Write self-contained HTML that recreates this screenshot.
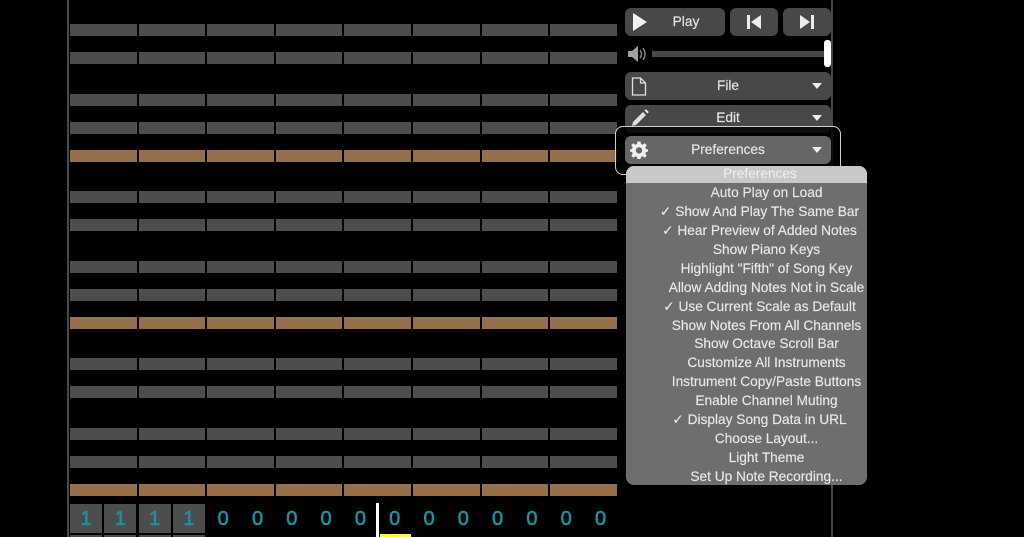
<!DOCTYPE html>
<html><head><meta charset="utf-8">
<style>
html,body{margin:0;padding:0;background:#000;width:1024px;height:537px;overflow:hidden}
body{position:relative;font-family:"Liberation Sans",sans-serif;color:#eee}
.a{position:absolute}
.c{position:absolute;height:12px;width:66.6px;background:#4d4d4d}
.b{background:#96704a}
.btn{position:absolute;background:#484848;border-radius:6px;text-align:center;font-size:13.7px;line-height:27px;height:28px;color:#e6e6e6;-webkit-text-stroke:.15px #e6e6e6}
.n{position:absolute;top:504px;width:32px;height:29px;text-align:center;font-size:20px;line-height:30px;color:#1793a8;-webkit-text-stroke:.6px #1793a8}
.m{position:absolute;left:626px;width:241px;text-align:center;font-size:13.7px;line-height:19px;height:19px;color:#e8e8e8;white-space:nowrap;-webkit-text-stroke:.15px #e8e8e8}
</style></head><body>
<div class="a" style="left:67px;top:0;width:2px;height:537px;background:#484848"></div>
<div class="a" style="left:831px;top:0;width:2px;height:537px;background:#484848"></div>
<div id="grid">
<div class="c" style="left:70.0px;top:24px"></div><div class="c" style="left:138.6px;top:24px"></div><div class="c" style="left:207.2px;top:24px"></div><div class="c" style="left:275.8px;top:24px"></div><div class="c" style="left:344.4px;top:24px"></div><div class="c" style="left:413.0px;top:24px"></div><div class="c" style="left:481.6px;top:24px"></div><div class="c" style="left:550.2px;top:24px"></div>
<div class="c" style="left:70.0px;top:52px"></div><div class="c" style="left:138.6px;top:52px"></div><div class="c" style="left:207.2px;top:52px"></div><div class="c" style="left:275.8px;top:52px"></div><div class="c" style="left:344.4px;top:52px"></div><div class="c" style="left:413.0px;top:52px"></div><div class="c" style="left:481.6px;top:52px"></div><div class="c" style="left:550.2px;top:52px"></div>
<div class="c" style="left:70.0px;top:94px"></div><div class="c" style="left:138.6px;top:94px"></div><div class="c" style="left:207.2px;top:94px"></div><div class="c" style="left:275.8px;top:94px"></div><div class="c" style="left:344.4px;top:94px"></div><div class="c" style="left:413.0px;top:94px"></div><div class="c" style="left:481.6px;top:94px"></div><div class="c" style="left:550.2px;top:94px"></div>
<div class="c" style="left:70.0px;top:122px"></div><div class="c" style="left:138.6px;top:122px"></div><div class="c" style="left:207.2px;top:122px"></div><div class="c" style="left:275.8px;top:122px"></div><div class="c" style="left:344.4px;top:122px"></div><div class="c" style="left:413.0px;top:122px"></div><div class="c" style="left:481.6px;top:122px"></div><div class="c" style="left:550.2px;top:122px"></div>
<div class="c b" style="left:70.0px;top:150px"></div><div class="c b" style="left:138.6px;top:150px"></div><div class="c b" style="left:207.2px;top:150px"></div><div class="c b" style="left:275.8px;top:150px"></div><div class="c b" style="left:344.4px;top:150px"></div><div class="c b" style="left:413.0px;top:150px"></div><div class="c b" style="left:481.6px;top:150px"></div><div class="c b" style="left:550.2px;top:150px"></div>
<div class="c" style="left:70.0px;top:191px"></div><div class="c" style="left:138.6px;top:191px"></div><div class="c" style="left:207.2px;top:191px"></div><div class="c" style="left:275.8px;top:191px"></div><div class="c" style="left:344.4px;top:191px"></div><div class="c" style="left:413.0px;top:191px"></div><div class="c" style="left:481.6px;top:191px"></div><div class="c" style="left:550.2px;top:191px"></div>
<div class="c" style="left:70.0px;top:219px"></div><div class="c" style="left:138.6px;top:219px"></div><div class="c" style="left:207.2px;top:219px"></div><div class="c" style="left:275.8px;top:219px"></div><div class="c" style="left:344.4px;top:219px"></div><div class="c" style="left:413.0px;top:219px"></div><div class="c" style="left:481.6px;top:219px"></div><div class="c" style="left:550.2px;top:219px"></div>
<div class="c" style="left:70.0px;top:261px"></div><div class="c" style="left:138.6px;top:261px"></div><div class="c" style="left:207.2px;top:261px"></div><div class="c" style="left:275.8px;top:261px"></div><div class="c" style="left:344.4px;top:261px"></div><div class="c" style="left:413.0px;top:261px"></div><div class="c" style="left:481.6px;top:261px"></div><div class="c" style="left:550.2px;top:261px"></div>
<div class="c" style="left:70.0px;top:289px"></div><div class="c" style="left:138.6px;top:289px"></div><div class="c" style="left:207.2px;top:289px"></div><div class="c" style="left:275.8px;top:289px"></div><div class="c" style="left:344.4px;top:289px"></div><div class="c" style="left:413.0px;top:289px"></div><div class="c" style="left:481.6px;top:289px"></div><div class="c" style="left:550.2px;top:289px"></div>
<div class="c b" style="left:70.0px;top:317px"></div><div class="c b" style="left:138.6px;top:317px"></div><div class="c b" style="left:207.2px;top:317px"></div><div class="c b" style="left:275.8px;top:317px"></div><div class="c b" style="left:344.4px;top:317px"></div><div class="c b" style="left:413.0px;top:317px"></div><div class="c b" style="left:481.6px;top:317px"></div><div class="c b" style="left:550.2px;top:317px"></div>
<div class="c" style="left:70.0px;top:358px"></div><div class="c" style="left:138.6px;top:358px"></div><div class="c" style="left:207.2px;top:358px"></div><div class="c" style="left:275.8px;top:358px"></div><div class="c" style="left:344.4px;top:358px"></div><div class="c" style="left:413.0px;top:358px"></div><div class="c" style="left:481.6px;top:358px"></div><div class="c" style="left:550.2px;top:358px"></div>
<div class="c" style="left:70.0px;top:386px"></div><div class="c" style="left:138.6px;top:386px"></div><div class="c" style="left:207.2px;top:386px"></div><div class="c" style="left:275.8px;top:386px"></div><div class="c" style="left:344.4px;top:386px"></div><div class="c" style="left:413.0px;top:386px"></div><div class="c" style="left:481.6px;top:386px"></div><div class="c" style="left:550.2px;top:386px"></div>
<div class="c" style="left:70.0px;top:428px"></div><div class="c" style="left:138.6px;top:428px"></div><div class="c" style="left:207.2px;top:428px"></div><div class="c" style="left:275.8px;top:428px"></div><div class="c" style="left:344.4px;top:428px"></div><div class="c" style="left:413.0px;top:428px"></div><div class="c" style="left:481.6px;top:428px"></div><div class="c" style="left:550.2px;top:428px"></div>
<div class="c" style="left:70.0px;top:456px"></div><div class="c" style="left:138.6px;top:456px"></div><div class="c" style="left:207.2px;top:456px"></div><div class="c" style="left:275.8px;top:456px"></div><div class="c" style="left:344.4px;top:456px"></div><div class="c" style="left:413.0px;top:456px"></div><div class="c" style="left:481.6px;top:456px"></div><div class="c" style="left:550.2px;top:456px"></div>
<div class="c b" style="left:70.0px;top:484px"></div><div class="c b" style="left:138.6px;top:484px"></div><div class="c b" style="left:207.2px;top:484px"></div><div class="c b" style="left:275.8px;top:484px"></div><div class="c b" style="left:344.4px;top:484px"></div><div class="c b" style="left:413.0px;top:484px"></div><div class="c b" style="left:481.6px;top:484px"></div><div class="c b" style="left:550.2px;top:484px"></div>
</div>

<div class="n" style="left:70px;background:#4d4d4d">1</div>
<div class="n" style="left:104.3px;background:#4d4d4d">1</div>
<div class="n" style="left:138.6px;background:#4d4d4d">1</div>
<div class="n" style="left:172.9px;background:#4d4d4d">1</div>
<div class="n" style="left:207.2px">0</div>
<div class="n" style="left:241.5px">0</div>
<div class="n" style="left:275.8px">0</div>
<div class="n" style="left:310.1px">0</div>
<div class="n" style="left:344.4px">0</div>
<div class="n" style="left:378.7px">0</div>
<div class="n" style="left:413px">0</div>
<div class="n" style="left:447.3px">0</div>
<div class="n" style="left:481.6px">0</div>
<div class="n" style="left:515.9px">0</div>
<div class="n" style="left:550.2px">0</div>
<div class="n" style="left:584.5px">0</div>
<div class="a" style="left:70px;top:535px;width:32px;height:2px;background:#4d4d4d"></div>
<div class="a" style="left:104.3px;top:535px;width:32px;height:2px;background:#4d4d4d"></div>
<div class="a" style="left:138.6px;top:535px;width:32px;height:2px;background:#4d4d4d"></div>
<div class="a" style="left:172.9px;top:535px;width:32px;height:2px;background:#4d4d4d"></div>
<div class="a" style="left:376px;top:503px;width:3px;height:34px;background:#fff"></div>
<div class="a" style="left:380px;top:534px;width:31px;height:3px;background:#ff3"></div>

<div class="btn" style="left:625px;top:8px;width:100px"><span style="margin-left:22px">Play</span></div>
<svg class="a" style="left:632px;top:12px" width="16" height="20"><path d="M1 1L15 10L1 19Z" fill="#f2f2f2"/></svg>
<div class="btn" style="left:730px;top:8px;width:48px"></div>
<svg class="a" style="left:746px;top:14px" width="16" height="16"><path d="M1 1H4V15H1ZM15 1V15L5 8Z" fill="#ececec"/></svg>
<div class="btn" style="left:783px;top:8px;width:48px"></div>
<svg class="a" style="left:799px;top:14px" width="16" height="16"><path d="M1 1V15L11 8ZM12 1H15V15H12Z" fill="#ececec"/></svg>

<svg class="a" style="left:628px;top:45px" width="20" height="18"><path d="M0 6H4L10 1V17L4 12H0Z" fill="#a0a0a0"/><path d="M12 5Q15 9 12 13M15 3Q19 9 15 15" stroke="#888" stroke-width="1.4" fill="none"/></svg>
<div class="a" style="left:652px;top:51px;width:174px;height:6px;background:#484848"></div>
<div class="a" style="left:824px;top:40px;width:7px;height:27px;background:#fff;border-radius:3px"></div>

<div class="btn" style="left:625px;top:72px;width:206px">File</div>
<svg class="a" style="left:631px;top:77px" width="16" height="19"><path d="M1.500 1H9.500L14.500 6V18H1.500Z" fill="none" stroke="#e0e0e0" stroke-width="1.3"/><path d="M9.500 1V6H14.500" fill="none" stroke="#e0e0e0" stroke-width="1.2"/></svg>
<svg class="a" style="left:812px;top:83px" width="10" height="7"><path d="M0 0H10L5 6Z" fill="#eee"/></svg>

<div class="btn" style="left:625px;top:105px;width:206px;line-height:25px">Edit</div>
<svg class="a" style="left:630px;top:108px" width="20" height="19"><path d="M2 18L3 14L13 4L16 7L6 17Z" fill="#e0e0e0"/><path d="M14.500 2.500L16 1.200L18.800 4L17.500 5.500Z" fill="#f0f0f0"/></svg>
<svg class="a" style="left:812px;top:115px" width="10" height="7"><path d="M0 0H10L5 6Z" fill="#eee"/></svg>

<div class="a" style="left:615px;top:126px;width:224px;height:47px;border:1px solid #d0d0d0;border-radius:8px;background:rgba(0,0,0,.82)"></div>
<div class="btn" style="left:625px;top:136px;width:206px;background:#666">Preferences</div>
<svg class="a" style="left:630px;top:141px" width="18" height="18" viewBox="0 0 18 18"><path fill="#f0f0f0" fill-rule="evenodd" d="M7.500 0.500H10.500L11 3L12.700 3.700L14.800 2.300L16.700 4.200L15.300 6.300L16 8L18 8.500V10.500L16 11L15.300 12.700L16.700 14.800L14.800 16.700L12.700 15.300L11 16L10.500 18H7.500L7 16L5.300 15.300L3.200 16.700L1.300 14.800L2.700 12.700L2 11L0 10.500V8.500L2 8L2.700 6.300L1.300 4.200L3.200 2.300L5.300 3.700L7 3ZM9 6.200A3.200 3.200 0 1 0 9 12.600A3.200 3.200 0 1 0 9 6.200Z"/></svg>
<svg class="a" style="left:812px;top:147px" width="10" height="7"><path d="M0 0H10L5 6Z" fill="#eee"/></svg>

<div class="a" style="left:626px;top:166px;width:241px;height:319px;background:#6e6e6e;border-radius:8px"></div>
<div class="a" style="left:626px;top:166px;width:241px;height:17px;background:#c8c8c8;border-radius:8px 8px 0 0"></div>
<div class="a" style="left:626px;top:164px;width:268px;text-align:center;font-size:13.7px;line-height:19px;color:#f0f0f0">Preferences</div>
<div class="m" style="top:183px;left:646px">Auto Play on Load</div>
<div class="m" style="top:202px;left:639px">✓ Show And Play The Same Bar</div>
<div class="m" style="top:221px;left:639px">✓ Hear Preview of Added Notes</div>
<div class="m" style="top:240px;left:646px">Show Piano Keys</div>
<div class="m" style="top:259px;left:646px">Highlight "Fifth" of Song Key</div>
<div class="m" style="top:278px;left:646px">Allow Adding Notes Not in Scale</div>
<div class="m" style="top:297px;left:639px">✓ Use Current Scale as Default</div>
<div class="m" style="top:316px;left:646px">Show Notes From All Channels</div>
<div class="m" style="top:334px;left:646px">Show Octave Scroll Bar</div>
<div class="m" style="top:353px;left:646px">Customize All Instruments</div>
<div class="m" style="top:372px;left:646px">Instrument Copy/Paste Buttons</div>
<div class="m" style="top:391px;left:646px">Enable Channel Muting</div>
<div class="m" style="top:410px;left:639px">✓ Display Song Data in URL</div>
<div class="m" style="top:429px;left:646px">Choose Layout...</div>
<div class="m" style="top:448px;left:646px">Light Theme</div>
<div class="m" style="top:467px;left:646px">Set Up Note Recording...</div>
</body></html>
